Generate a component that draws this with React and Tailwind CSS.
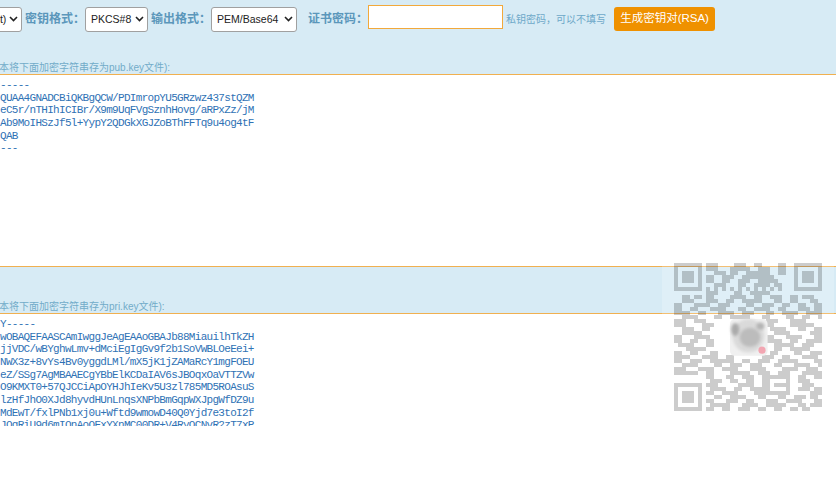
const cjk = "font-['Liberation_Sans','Noto_Sans_CJK_SC',sans-serif]";

const publicKey = [
  '-----',
  'QUAA4GNADCBiQKBgQCW/PDImropYU5GRzwz437stQZM',
  'eC5r/nTHIhICIBr/X9m9UqFVgSznhHovg/aRPxZz/jM',
  'Ab9MoIHSzJf5l+YypY2QDGkXGJZoBThFFTq9u4og4tF',
  'QAB',
  '---',
];

const privateKey = [
  'Y-----',
  'wOBAQEFAASCAmIwggJeAgEAAoGBAJb88MiauilhTkZH',
  'jjVDC/wBYghwLmv+dMciEgIgGv9f2b1SoVWBLOeEei+',
  'NWX3z+8vYs4Bv0yggdLMl/mX5jK1jZAMaRcY1mgFOEU',
  'eZ/SSg7AgMBAAECgYBbElKCDaIAV6sJBOqxOaVTTZVw',
  'O9KMXT0+57QJCCiApOYHJhIeKv5U3zl785MD5ROAsuS',
  'lzHfJhO0XJd8hyvdHUnLnqsXNPbBmGqpWXJpgWfDZ9u',
  'MdEwT/fxlPNb1xj0u+Wftd9wmowD40Q0Yjd7e3toI2f',
  'JOgRiU9d6mIOnAoOExYXnMC00DR+V4RyOCNvR2zT7xP',
];

// modules read off the reference, finder corners are drawn separately
const qrRows = [
  '0000000011100001110011000011000000000',
  '0000000011100011111001110011000000000',
  '0000000000111011001111110011000000000',
  '0000000011001110011111111000000000000',
  '0000000011001100111001111100000000000',
  '0000000000111000110011110110000000000',
  '0000000010101010101010101010000000000',
  '0000000011100001100111110000000000000',
  '0011011011000011110011001110011011100',
  '0011100011100110011111000110011000110',
  '1100011110011100001100111001100110011',
  '1100110001111000110011110011000111011',
  '1111001100011110011100011001111001111',
  '0011110000110011111000110000110011001',
  '1110011100000000000000011100011110000',
  '1110000111000000000000011000011111100',
  '0011100110000000000000001111000110011',
  '0011111000000000000000000111100000111',
  '1100011110000000000000011000111100011',
  '1100110011000000000000011110011001111',
  '0111100011000000000000000111110011100',
  '0001111100000000000000000110011111000',
  '1100110001100000000000001100001100111',
  '1111000111100110000000111001100011110',
  '1100111001111110011001110011111000011',
  '0011110000110011100111000110001111001',
  '1110001111001111000111100001111001110',
  '1111110011000011111001110011100011111',
  '0000000011000110011100111111100110011',
  '0000000001110011001100110000100111000',
  '0000000011100000111100110111100011100',
  '0000000001111001100111110000100111011',
  '0000000011001111000011111111100000111',
  '0000000000110011110001100011001110110',
  '0000000011000111001100011100111100011',
  '0000000001111100011110011111000110111',
  '0000000011001100111001100110011011000',
];

function Finder({ x, y }) {
  return (
    <g>
      <rect x={x} y={y} width="7" height="1" />
      <rect x={x} y={y + 6} width="7" height="1" />
      <rect x={x} y={y + 1} width="1" height="5" />
      <rect x={x + 6} y={y + 1} width="1" height="5" />
      <rect x={x + 2} y={y + 2} width="3" height="3" />
    </g>
  );
}

function QrOverlay() {
  return (
    <div className="absolute left-[662px] top-[251px] flex h-[172px] w-[172px] items-center justify-center bg-white/20">
      <svg width="148" height="148" viewBox="0 0 37 37" shapeRendering="crispEdges">
        <g fill="#000" fillOpacity="0.2">
          {qrRows.map((row, y) =>
            row.split('').map((cell, x) => {
              const inFinder = (y < 8 && (x < 8 || x > 28)) || (y > 28 && x < 8);
              if (cell !== '1' || inFinder) return null;
              return <rect key={`${x}-${y}`} x={x} y={y} width="1" height="1" />;
            })
          )}
          <Finder x={0} y={0} />
          <Finder x={30} y={0} />
          <Finder x={0} y={30} />
        </g>
        <defs>
          <filter id="soft" x="-30%" y="-30%" width="160%" height="160%">
            <feGaussianBlur stdDeviation="0.45" />
          </filter>
        </defs>
        <g shapeRendering="auto">
          <rect x="14" y="14" width="9.4" height="9.2" rx="1.2" fill="#f0f0f0" />
          <ellipse cx="18.6" cy="18.2" rx="4" ry="4.2" fill="#dadada" filter="url(#soft)" />
          <ellipse cx="19" cy="18.6" rx="2.6" ry="2.4" fill="#bcbcbc" filter="url(#soft)" />
          <ellipse cx="15.3" cy="16.6" rx="1" ry="1.6" fill="#aaa" filter="url(#soft)" />
          <ellipse cx="21.6" cy="15.8" rx="1" ry="0.9" fill="#b4b4b4" filter="url(#soft)" />
          <circle cx="22" cy="21.8" r="0.9" fill="#f2a6b2" />
        </g>
      </svg>
    </div>
  );
}

function KeyText({ lines, className }) {
  return (
    <div className={`overflow-hidden font-['Liberation_Mono',monospace] text-[11px] leading-[12.67px] tracking-[-0.7px] whitespace-pre text-[#2f72b5] ${className}`}>
      {lines.map((line, i) => (
        <div key={i}>{line}</div>
      ))}
    </div>
  );
}

function Label({ children, className = '' }) {
  return <span className={`shrink-0 text-[12px] font-bold text-[#5b97bb] ${className}`}>{children}</span>;
}

function Picker({ value, className = '' }) {
  return (
    <div className={`relative h-[25px] shrink-0 ${className}`}>
      <select
        defaultValue={value}
        className="h-full w-full appearance-none rounded-[3px] border border-[#a0a0a0] bg-white pl-[5px] text-[10.5px] text-[#222]"
      >
        <option>{value}</option>
      </select>
      <svg className="pointer-events-none absolute right-[4px] top-[10px]" width="9" height="6" viewBox="0 0 9 6" fill="none" stroke="#222" strokeWidth="1.6">
        <path d="M1 1l3.5 3.5L8 1" />
      </svg>
    </div>
  );
}

export default function App() {
  return (
    <div className={`relative h-[479px] w-[836px] overflow-hidden bg-white ${cjk}`}>
      <div className="h-[75px] border-b border-[#f0b050] bg-[#d7ebf5]">
        <div className="flex items-start pt-[6px]">
          <Picker value="1024 (bit)" className="-ml-[44px] w-[66px]" />
          <Label className="ml-[3px] mt-[4px]">{'密钥格式\uFF1A'}</Label>
          <Picker value="PKCS#8" className="w-[63px]" />
          <Label className="ml-[3px] mt-[4px]">{'输出格式\uFF1A'}</Label>
          <Picker value="PEM/Base64" className="w-[86px]" />
          <Label className="ml-[11px] mt-[4px]">{'证书密码\uFF1A'}</Label>
          <input className="-mt-[1px] h-[24px] w-[135px] shrink-0 border border-[#f2a93b] bg-white" />
          <span className="ml-[3px] mt-[6px] w-[100px] shrink-0 text-[10px] text-[#6da8c8]">{'私钥密码\uFF0C可以不填写'}</span>
          <button
            type="button"
            className="ml-[8px] mt-[1px] h-[24px] w-[101px] shrink-0 rounded-[3px] bg-[#ef9100] text-[11.5px] text-white"
          >
            生成密钥对(RSA)
          </button>
        </div>
        <p className="mt-[31px] -ml-[1px] text-[10px] leading-[12px] text-[#72abc9]">本将下面加密字符串存为pub.key文件):</p>
      </div>

      <KeyText lines={publicKey} className="h-[191px] pt-[4px]" />

      <div className="flex h-[48px] items-end border-y border-[#f0b050] bg-[#d7ebf5]">
        <p className="-ml-[1px] text-[10px] leading-[12px] text-[#72abc9]">本将下面加密字符串存为pri.key文件):</p>
      </div>

      <KeyText lines={privateKey} className="h-[112px] pt-[4px]" />

      <QrOverlay />
    </div>
  );
}
